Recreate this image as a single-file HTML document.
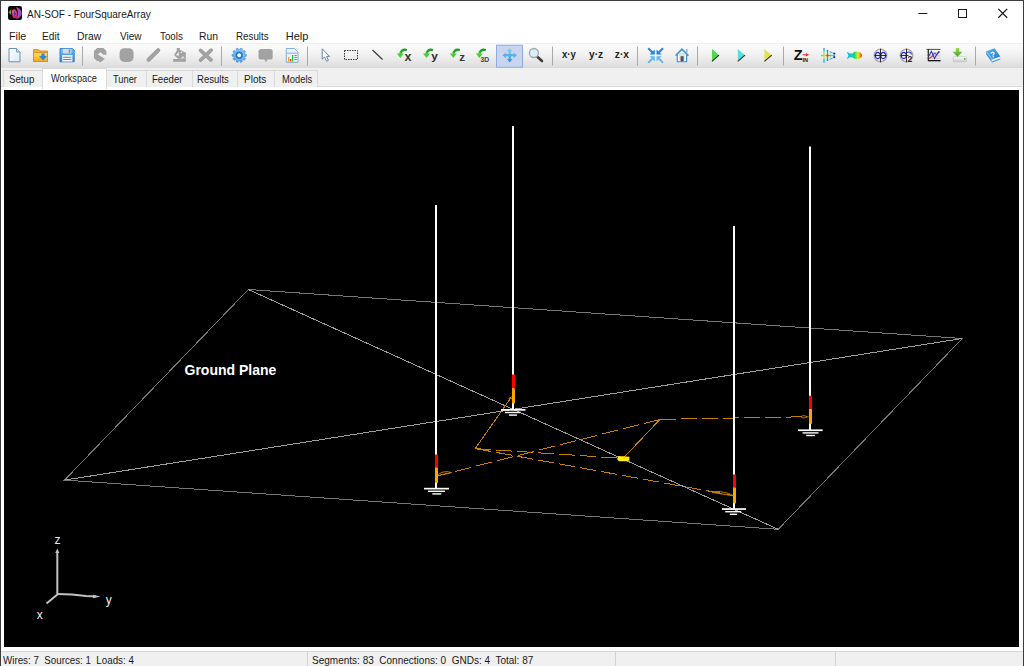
<!DOCTYPE html>
<html><head><meta charset="utf-8">
<style>
html,body{margin:0;padding:0;}
body{width:1024px;height:666px;position:relative;overflow:hidden;background:#fff;font-family:"Liberation Sans",sans-serif;color:#000;}
.a{position:absolute;}
.t{position:absolute;white-space:pre;font-size:11px;line-height:normal;transform-origin:0 0;color:#1a1a1a;}
#tb{left:1px;top:43px;width:1022px;height:25px;background:linear-gradient(#fafafa,#f9f9f9 20%,#eeeeee 55%,#e2e2e2 85%,#dadada);}
#tabs{left:1px;top:68px;width:1022px;height:19px;background:#f0f0f0;}
#page{left:1px;top:86px;width:1021px;height:565px;background:#fff;border-top:1px solid #dadada;box-sizing:border-box;}
#cv{left:4px;top:90px;width:1015px;height:557px;background:#000;}
#status{left:1px;top:651px;width:1022px;height:15px;background:#f0f0f0;border-top:1px solid #d8d8d8;box-sizing:border-box;}
.bl{position:absolute;top:0;height:666px;width:1px;background:#3c3c3c;}
.tab{position:absolute;top:70px;height:17px;background:#f0f0f0;border:1px solid #dadada;border-bottom:none;box-sizing:border-box;}
.ssep{position:absolute;top:652px;width:1px;height:14px;background:#d2d2d2;}
svg{position:absolute;left:0;top:0;}
</style></head><body>
<div class="a" id="tb"></div>
<div class="a" id="tabs"></div>
<div class="a" id="page"></div>
<div class="a" id="cv"></div>
<div class="a" id="status"></div>

<!-- tabs -->
<div class="tab" style="left:3px;width:40px;"></div>
<div class="tab" style="left:106px;width:41px;"></div>
<div class="tab" style="left:146px;width:47px;"></div>
<div class="tab" style="left:192px;width:46px;"></div>
<div class="tab" style="left:237px;width:38px;"></div>
<div class="tab" style="left:274px;width:44px;"></div>
<div class="a" style="left:42px;top:68px;width:65px;height:21px;background:#fff;border:1px solid #dadada;border-bottom:none;box-sizing:border-box;"></div>

<!-- title & menu text -->
<div class="t" style="left:27px;top:8px;transform:scaleX(0.912);">AN-SOF - FourSquareArray</div>
<div class="t" style="left:8.7px;top:30px;transform:scaleX(0.975);">File</div>
<div class="t" style="left:42.4px;top:30px;transform:scaleX(0.922);">Edit</div>
<div class="t" style="left:77.4px;top:30px;transform:scaleX(0.94);">Draw</div>
<div class="t" style="left:119.5px;top:30px;transform:scaleX(0.912);">View</div>
<div class="t" style="left:159.7px;top:30px;transform:scaleX(0.888);">Tools</div>
<div class="t" style="left:199.3px;top:30px;transform:scaleX(0.947);">Run</div>
<div class="t" style="left:235.7px;top:30px;transform:scaleX(0.889);">Results</div>
<div class="t" style="left:285.7px;top:30px;transform:scaleX(1.0);">Help</div>

<div class="t" style="left:8.7px;top:73px;transform:scaleX(0.882);">Setup</div>
<div class="t" style="left:50.8px;top:72px;transform:scaleX(0.838);">Workspace</div>
<div class="t" style="left:113px;top:73px;transform:scaleX(0.846);">Tuner</div>
<div class="t" style="left:152px;top:73px;transform:scaleX(0.874);">Feeder</div>
<div class="t" style="left:197.3px;top:73px;transform:scaleX(0.867);">Results</div>
<div class="t" style="left:244px;top:73px;transform:scaleX(0.913);">Plots</div>
<div class="t" style="left:281.7px;top:73px;transform:scaleX(0.85);">Models</div>

<div class="t" style="left:3px;top:654px;transform:scaleX(0.888);">Wires: 7  Sources: 1  Loads: 4</div>
<div class="t" style="left:311.7px;top:654px;transform:scaleX(0.91);">Segments: 83  Connections: 0  GNDs: 4  Total: 87</div>
<div class="ssep" style="left:307px;"></div>
<div class="ssep" style="left:615px;"></div>
<div class="ssep" style="left:835px;"></div>

<svg width="1024" height="90" viewBox="0 0 1024 90">
<defs>
<linearGradient id="gDoc" x1="0" y1="0" x2="1" y2="1"><stop offset="0" stop-color="#ffffff"/><stop offset="1" stop-color="#dbe9f3"/></linearGradient>
<linearGradient id="gFold" x1="0" y1="0" x2="0" y2="1"><stop offset="0" stop-color="#ffe35a"/><stop offset="1" stop-color="#f5a51c"/></linearGradient>
<linearGradient id="gSave" x1="0" y1="0" x2="0" y2="1"><stop offset="0" stop-color="#6cc0f4"/><stop offset="1" stop-color="#2f86d6"/></linearGradient>
<linearGradient id="gPan" x1="0" y1="0" x2="0" y2="1"><stop offset="0" stop-color="#8ad6fa"/><stop offset="1" stop-color="#1e8ee0"/></linearGradient>
<linearGradient id="gFish" x1="0" y1="0" x2="1" y2="0"><stop offset="0" stop-color="#00c8d8"/><stop offset="0.35" stop-color="#20e060"/><stop offset="0.6" stop-color="#e8e820"/><stop offset="1" stop-color="#f03010"/></linearGradient>
<linearGradient id="gRad" x1="0" y1="0" x2="0" y2="1"><stop offset="0" stop-color="#40a0f0"/><stop offset="0.5" stop-color="#f0e020"/><stop offset="1" stop-color="#40a0f0"/></linearGradient>
<linearGradient id="gTray" x1="0" y1="0" x2="0" y2="1"><stop offset="0" stop-color="#ffffff"/><stop offset="1" stop-color="#c8c8c8"/></linearGradient>
<linearGradient id="gBook" x1="0" y1="0" x2="1" y2="1"><stop offset="0" stop-color="#5ab8f0"/><stop offset="1" stop-color="#1a78d0"/></linearGradient>
<linearGradient id="gDl" x1="0" y1="0" x2="0" y2="1"><stop offset="0" stop-color="#9ae040"/><stop offset="1" stop-color="#3aa81e"/></linearGradient>
</defs>

<!-- app icon -->
<defs><linearGradient id="gApp" x1="0" y1="0" x2="0" y2="1"><stop offset="0" stop-color="#e03890"/><stop offset="0.4" stop-color="#9a58c8"/><stop offset="1" stop-color="#8048b8"/></linearGradient></defs>
<rect x="8" y="6" width="14" height="14" rx="2.2" fill="#050505"/>
<path d="M8.3,12.2 L11.3,9 L11.3,15.2 Z" fill="#7a9440"/>
<path d="M15.8,7.2 C19.5,7.8 21.8,10.5 21.6,13.4 C21.4,16.4 19,18.6 15.8,18.8 C18.6,16.2 18.8,10.8 15.8,7.2 Z" fill="url(#gApp)"/>
<path d="M12.2,10.2 C13.2,8.8 15.2,9 16.2,10.6 C17.6,12.6 17.8,15.4 16.8,17.4 C15.4,18.8 13.2,18.2 12.6,16.2 C12,14.2 11.8,12.2 12.2,10.2 Z" fill="#d8388e"/>
<path d="M14,11.2 L16.6,13.4 L14.6,15.8 Z" fill="#1c34c8"/>
<path d="M14.8,11.8 L16.2,12.8 L15.2,13.2 Z" fill="#30b0e0"/>
<path d="M12.4,10.6 L13.8,10.2 L13.4,13.2 L12.4,12.6 Z" fill="#f07a20"/>
<path d="M13.4,16.4 C14.6,18.2 16.6,18.4 18.2,17.4 L16.8,15.6 Z" fill="#f01444"/>
<!-- window controls -->
<rect x="918.4" y="13" width="9" height="1" fill="#1a1a1a"/>
<rect x="958.5" y="9.5" width="8" height="8" fill="none" stroke="#1a1a1a" stroke-width="1"/>
<path d="M998.3,8.9 L1007.2,17.8 M1007.2,8.9 L998.3,17.8" stroke="#1a1a1a" stroke-width="1.25" fill="none"/>

<!-- menu underline -->
<rect x="1" y="43" width="1022" height="1" fill="#f0f0f0"/>

<!-- separators -->
<g fill="#a8a8a8">
<rect x="82" y="46.5" width="1" height="19"/>
<rect x="221" y="46.5" width="1" height="19"/>
<rect x="307" y="46.5" width="1" height="19"/>
<rect x="552" y="46.5" width="1" height="19"/>
<rect x="637" y="46.5" width="1" height="19"/>
<rect x="697" y="46.5" width="1" height="19"/>
<rect x="783" y="46.5" width="1" height="19"/>
<rect x="975" y="46.5" width="1" height="19"/>
</g>

<!-- 1 new doc -->
<path d="M9,48.5 H16.5 L20,52 V61.8 H9 Z" fill="url(#gDoc)" stroke="#6890b4" stroke-width="1"/>
<path d="M16.5,48.5 V52 H20" fill="#c9dcea" stroke="#6890b4" stroke-width="0.8"/>

<!-- 2 open folder -->
<path d="M33.5,49.5 H38.5 L40,51 H47.5 V61.5 H33.5 Z" fill="#f4b23a" stroke="#d98c24" stroke-width="0.9"/>
<path d="M33.5,52.5 H47.5 V61.5 H33.5 Z" fill="url(#gFold)" stroke="#d98c24" stroke-width="0.9"/>
<path d="M41.5,53.5 H44.5 V56 H47 L43,60.5 L39,56 H41.5 Z" fill="#2a88d8"/>

<!-- 3 save -->
<path d="M60,48.5 H72.5 L74.2,50.2 V61.8 H60 Z" fill="url(#gSave)" stroke="#2c7cc8" stroke-width="0.9"/>
<rect x="62.8" y="48.8" width="8.6" height="4.6" fill="#dcdcdc"/>
<rect x="68.6" y="49.5" width="1.8" height="3.2" fill="#4aa0e0"/>
<rect x="62.2" y="55" width="10.2" height="6.6" fill="#f2f2f2"/>
<rect x="63.2" y="56.8" width="8.2" height="0.9" fill="#7a7a7a"/>
<rect x="63.2" y="59" width="8.2" height="0.9" fill="#7a7a7a"/>

<!-- 4 gray hook -->
<path d="M97.2,48 L103.4,48 L106.4,51 L106.4,54.8 L103.4,54.8 L100.4,52.2 L97.8,54.4 L104.8,58.8 L102,61.2 L99.6,62.4 L98.8,61 L97,61 L93.9,58 L93.9,51 Z" fill="#a2a2a2"/>
<!-- 5 gray octagon -->
<rect x="119.6" y="48.2" width="14" height="13.8" rx="4.8" fill="#a2a2a2"/>

<!-- 6 gray pencil line -->
<path d="M148.6,59.8 L158.2,50.2" stroke="#a2a2a2" stroke-width="4.2" stroke-linecap="round"/>

<!-- 7 gray microscope -->
<rect x="173.2" y="59" width="12.7" height="2.8" fill="#a2a2a2"/>
<path d="M176.8,48 L179.9,48 L179.9,50 L181.5,50.5 L183.5,51.8 L185.8,52.5 L185.8,58.8 L178,58.8 L176.5,57.5 L174.5,55.5 L174.5,54 L176.5,51.2 L176.8,50 Z" fill="#a2a2a2"/>
<path d="M176,55.2 L178.8,51.8 L178.8,55.8 Z M181,58.2 L183.5,55.8 L183.5,58.2 Z" fill="#f2f2f2"/>
<circle cx="181.4" cy="52.4" r="0.8" fill="#eeeeee"/>
<!-- 8 gray X -->
<path d="M200.6,50.4 L211,60 M211.2,50.2 L200.6,60.2" stroke="#a2a2a2" stroke-width="3.8" stroke-linecap="round"/>

<!-- 9 gear -->
<defs><radialGradient id="gGear" cx="0.5" cy="0.4" r="0.6"><stop offset="0" stop-color="#a8e0fc"/><stop offset="1" stop-color="#4a9ee6"/></radialGradient></defs>
<path d="M238.21,48.17 L240.19,48.17 L240.32,49.81 L241.52,50.20 L242.59,48.95 L244.19,50.11 L243.33,51.52 L244.07,52.54 L245.68,52.15 L246.29,54.04 L244.76,54.67 L244.76,55.93 L246.29,56.56 L245.68,58.45 L244.07,58.06 L243.33,59.08 L244.19,60.49 L242.59,61.65 L241.52,60.40 L240.32,60.79 L240.19,62.43 L238.21,62.43 L238.08,60.79 L236.88,60.40 L235.81,61.65 L234.21,60.49 L235.07,59.08 L234.33,58.06 L232.72,58.45 L232.11,56.56 L233.64,55.93 L233.64,54.67 L232.11,54.04 L232.72,52.15 L234.33,52.54 L235.07,51.52 L234.21,50.11 L235.81,48.95 L236.88,50.20 L238.08,49.81 Z" fill="url(#gGear)" stroke="#3a88d6" stroke-width="0.5" transform="rotate(18 239.2 55.3)"/>
<circle cx="239.2" cy="55.3" r="2.9" fill="none" stroke="#2a74c4" stroke-width="1.6"/>
<circle cx="239.2" cy="55.3" r="1.7" fill="#f8fbff"/>
<!-- 10 speech bubble -->
<rect x="258.5" y="49" width="14.2" height="10.6" rx="2.6" fill="#a2a2a2"/>
<path d="M264,59 L268,59 L266,62.2 Z" fill="#a2a2a2"/>

<!-- 11 report -->
<path d="M286.3,48.5 H294.5 L298,52 V62.3 H286.3 Z" fill="#eaf3fa" stroke="#7aa6c8" stroke-width="0.9"/>
<rect x="287" y="52.5" width="10.5" height="1.4" fill="#9cc8e8"/>
<rect x="288" y="57" width="1.3" height="4.5" fill="#f4a020"/>
<rect x="290" y="59" width="1.3" height="2.5" fill="#e83030"/>
<rect x="292" y="55" width="1.3" height="6.5" fill="#30c040"/>
<rect x="294.5" y="55" width="2.2" height="1" fill="#3a90e0"/>
<rect x="294.5" y="57" width="2.2" height="1" fill="#3a90e0"/>
<rect x="294.5" y="59" width="2.2" height="1" fill="#3a90e0"/>

<!-- 12 cursor -->
<path d="M322.2,48.8 L322.2,59.2 L324.6,57 L326.6,61.2 L328.4,60.4 L326.5,56.4 L329.5,56.4 Z" fill="#ffffff" stroke="#5a78a0" stroke-width="0.9" stroke-linejoin="round"/>

<!-- 13 dashed rect -->
<rect x="344.5" y="50.5" width="13" height="9" fill="none" stroke="#3a3a3a" stroke-width="1" stroke-dasharray="1.5,1"/>

<!-- 14 line -->
<path d="M372.5,50 L382.5,59.5" stroke="#3a3a3a" stroke-width="1.2"/>

<!-- 15-18 rotate arrows -->
<defs><linearGradient id="gRot" x1="0" y1="1" x2="0.6" y2="0"><stop offset="0" stop-color="#78e858"/><stop offset="0.5" stop-color="#28a828"/><stop offset="1" stop-color="#1c9a2a"/></linearGradient></defs>
<g id="rot">
<path d="M400.3,55 C400.2,51 402.8,49 406.8,50.1" stroke="url(#gRot)" stroke-width="2.5" fill="none"/>
<path d="M396.9,53.6 L403.8,53.6 L400.35,57.9 Z" fill="#4ccc3c"/>
</g>
<use href="#rot" x="26.15" y="0"/>
<use href="#rot" x="53" y="0"/>
<use href="#rot" x="79" y="0"/>
<text x="404.4" y="60.7" font-family="Liberation Sans" font-size="12.5" font-weight="bold" fill="#383838">x</text>
<text x="431.2" y="59.6" font-family="Liberation Sans" font-size="11.8" font-weight="bold" fill="#2a2a2a">y</text>
<text x="459.3" y="60.6" font-family="Liberation Sans" font-size="11.5" font-weight="bold" fill="#383838">z</text>
<text x="480.6" y="61.8" font-family="Liberation Sans" font-size="6.8" font-weight="bold" fill="#4a3a40">3D</text>
<!-- 19 pressed pan -->
<rect x="496.5" y="45.2" width="26" height="22" fill="#c9d5ee" stroke="#8eabe4" stroke-width="1"/>
<path d="M509.70,48.00 L512.40,51.30 L510.80,51.30 L510.80,54.10 L513.60,54.10 L513.60,52.50 L516.90,55.20 L513.60,57.90 L513.60,56.30 L510.80,56.30 L510.80,59.10 L512.40,59.10 L509.70,62.40 L507.00,59.10 L508.60,59.10 L508.60,56.30 L505.80,56.30 L505.80,57.90 L502.50,55.20 L505.80,52.50 L505.80,54.10 L508.60,54.10 L508.60,51.30 L507.00,51.30 Z" fill="url(#gPan)"/>

<!-- 20 magnifier -->
<path d="M537.3,56.8 L542,61" stroke="#3a3a3a" stroke-width="2.6" stroke-linecap="round"/>
<circle cx="533.9" cy="53" r="4.5" fill="#d6effb" stroke="#a6a6a6" stroke-width="1.3"/>

<!-- 21-23 text views -->
<text x="562" y="58.4" font-family="Liberation Sans" font-size="11" font-weight="bold" fill="#1e1e1e" transform="translate(562,0) scale(0.875,1) translate(-562,0)">x·y</text>
<text x="589" y="58.4" font-family="Liberation Sans" font-size="11" font-weight="bold" fill="#1e1e1e" transform="translate(589,0) scale(0.933,1) translate(-589,0)">y·z</text>
<text x="614.8" y="58.4" font-family="Liberation Sans" font-size="11" font-weight="bold" fill="#1e1e1e" transform="translate(614.8,0) scale(0.933,1) translate(-614.8,0)">z·x</text>

<!-- 24 shrink arrows -->
<g fill="#2a86d6">
<path d="M654.8,49.4 V54.6 H649.6 Z"/>
<path d="M656.5,49.4 V54.6 H661.7 Z"/>
</g>
<g stroke="#2a86d6" stroke-width="2.1" stroke-linecap="square">
<path d="M649,48.9 L652.8,52.7"/><path d="M662.3,48.9 L658.5,52.7"/>
</g>
<g fill="#62bcf2">
<path d="M654.8,61.6 V56.3 H649.6 Z"/>
<path d="M656.5,61.6 V56.3 H661.7 Z"/>
</g>
<g stroke="#62bcf2" stroke-width="2.1" stroke-linecap="square">
<path d="M649,62 L652.8,58.2"/><path d="M662.3,62 L658.5,58.2"/>
</g>
<!-- 25 home -->
<rect x="686" y="49" width="1.6" height="3.5" fill="#a0b8d0"/>
<path d="M677.3,55 V61.6 H686.6 V55" fill="#ffffff" stroke="#3a98e0" stroke-width="1.2"/>
<path d="M675.6,55.6 L682,49.2 L688.4,55.6" fill="none" stroke="#3a98e0" stroke-width="1.6"/>
<rect x="679.2" y="53" width="5.6" height="8.5" fill="#e2e2e2"/><rect x="680.6" y="56.2" width="3" height="5.3" fill="#505050"/>

<!-- 26-28 play -->
<path d="M712,49 L719,55.2 L712,61.4 Z" fill="#50d850"/>
<path d="M719,55.2 L712,61.4" stroke="#2a2a2a" stroke-width="1.1"/>
<path d="M737.8,49 L745,55.2 L737.8,61.4 Z" fill="#54e0e2"/>
<path d="M745,55.2 L737.8,61.4" stroke="#2a2a2a" stroke-width="1.1"/>
<path d="M764.4,49 L771.8,55.2 L764.4,61.4 Z" fill="#e2e258"/>
<path d="M771.8,55.2 L764.4,61.4" stroke="#2a2a2a" stroke-width="1.1"/>

<!-- 29 Z_IN -->
<text x="793.8" y="59.8" font-family="Liberation Sans" font-size="14.5" font-weight="bold" fill="#111">Z</text>
<path d="M802.6,54.8 L806.5,54.8" stroke="#f03030" stroke-width="1.1"/>
<path d="M806,53 L809,54.8 L806,56.6 Z" fill="#f03030"/>
<text x="802.4" y="62.2" font-family="Liberation Sans" font-size="5.6" font-weight="bold" fill="#222">IN</text>

<!-- 30 radiation pattern -->
<defs>
<linearGradient id="gB1" x1="0" y1="0" x2="0" y2="1"><stop offset="0" stop-color="#5090f0"/><stop offset="0.2" stop-color="#40d0e0"/><stop offset="0.35" stop-color="#e0e040"/><stop offset="0.5" stop-color="#a0e040"/><stop offset="0.65" stop-color="#e0e040"/><stop offset="0.8" stop-color="#40d0e0"/><stop offset="1" stop-color="#5090f0"/></linearGradient>
<linearGradient id="gB2" x1="0" y1="0" x2="0" y2="1"><stop offset="0" stop-color="#3060f0"/><stop offset="0.3" stop-color="#30d060"/><stop offset="0.5" stop-color="#f02010"/><stop offset="0.7" stop-color="#30d060"/><stop offset="1" stop-color="#3060f0"/></linearGradient>
<linearGradient id="gH" x1="0" y1="0" x2="1" y2="0"><stop offset="0" stop-color="#40c0f0"/><stop offset="0.3" stop-color="#e0e040"/><stop offset="0.45" stop-color="#f02010"/><stop offset="0.7" stop-color="#f0a020"/><stop offset="1" stop-color="#40d060"/></linearGradient>
<linearGradient id="gFish2" x1="0" y1="0" x2="1" y2="0"><stop offset="0" stop-color="#00c8e0"/><stop offset="0.3" stop-color="#10e070"/><stop offset="0.6" stop-color="#e8f020"/><stop offset="0.8" stop-color="#f8a010"/><stop offset="1" stop-color="#f82000"/></linearGradient>
</defs>
<rect x="823.2" y="48" width="1.6" height="14.6" fill="url(#gB1)"/>
<rect x="826.8" y="49.9" width="1.4" height="11" fill="url(#gB2)"/>
<rect x="821" y="54.9" width="14" height="1.3" fill="url(#gH)"/>
<path d="M829.6,51.5 L831.2,52.2 L832.6,53 M829.6,59.5 L831.2,58.8 L832.6,58" stroke="#40b8f0" stroke-width="1.2" fill="none"/>
<path d="M829.8,53.5 L831,54.5 M829.8,57.5 L831,56.5" stroke="#60e060" stroke-width="1" fill="none"/>
<circle cx="834.2" cy="53.6" r="1.1" fill="#1030f0"/>
<circle cx="834.2" cy="57.2" r="1.1" fill="#1030f0"/>

<!-- 31 fish -->
<path d="M846.8,51.8 L849.8,53.6 L851.8,53.2 L851.8,57.8 L849.8,57.3 L846.8,59.2 L848.4,55.5 Z" fill="#18c0c8"/>
<ellipse cx="856.8" cy="55.4" rx="5.2" ry="3.8" fill="url(#gFish2)"/>

<!-- 32 polar -->
<g transform="translate(880.5,55.5)">
<circle r="6.3" fill="none" stroke="#a6a6a6" stroke-width="1.3"/>
<ellipse cx="-2.7" cy="0" rx="2.5" ry="3.1" fill="none" stroke="#2424f0" stroke-width="1.2"/>
<ellipse cx="2.7" cy="0" rx="2.5" ry="3.1" fill="none" stroke="#2424f0" stroke-width="1.2"/>
<path d="M0,-6.8 V6.8 M-6,0 H6" stroke="#1a1a1a" stroke-width="0.9"/>
</g>
<!-- 33 polar2 -->
<g transform="translate(906.5,55.5)">
<circle r="6.3" fill="none" stroke="#a6a6a6" stroke-width="1.3"/>
<ellipse cx="-2.7" cy="0" rx="2.5" ry="3.1" fill="none" stroke="#2424f0" stroke-width="1.2"/>
<path d="M0.4,-3 C2,-4 4.6,-3.4 5,-1.2" fill="none" stroke="#2424f0" stroke-width="1.2"/>
<path d="M0,-6.8 V6.8 M-6,0 H2" stroke="#1a1a1a" stroke-width="0.9"/>
</g>
<text x="907.4" y="61.9" font-family="Liberation Sans" font-size="8.6" font-weight="bold" fill="#1c2450">2</text>

<!-- 34 chart -->
<g>
<path d="M928.5,52.5 H940.5 M928.5,55.8 H940.5 M928.5,58.2 H940.5" stroke="#b8b8b8" stroke-width="0.7"/>
<path d="M926.5,49.4 H940.5" stroke="#404040" stroke-width="0.9"/>
<path d="M928.3,49 V60.6 H940.6" fill="none" stroke="#1a1a1a" stroke-width="1.1"/>
<path d="M926.8,52 H928 M926.8,55 H928 M926.8,58 H928 M930,61 V62 M933,61 V62 M936,61 V62 M939,61 V62" stroke="#555" stroke-width="0.6"/>
<path d="M929,58.5 L932,56.5 L934,53.6 L935,53.2 L936.5,55 L939.5,51.6" fill="none" stroke="#f02828" stroke-width="1.1"/>
<path d="M929,56 L931.4,51.3 L934.5,58.5 L937,54 L939.2,51" fill="none" stroke="#2838f0" stroke-width="1.1"/>
</g>

<!-- 35 download -->
<rect x="953.2" y="56.8" width="13.2" height="5" rx="0.6" fill="url(#gTray)" stroke="#b8b8b8" stroke-width="0.6"/>
<rect x="964" y="58.2" width="1.3" height="1.6" fill="#30c030"/>
<path d="M955.8,48 H959.2 V51.8 H962.4 L957.5,56.8 L952.6,51.8 H955.8 Z" fill="url(#gDl)"/>

<!-- 36 help book -->
<path d="M985.9,51.6 L991.6,59.6 L992,62.4 L986.3,54.4 Z" fill="#3a96e0"/>
<path d="M991.6,59.6 L1000.3,56.4 L1000.4,58.8 L992,61.8 Z" fill="#eef2f6"/>
<path d="M992,61.6 L1000.4,58.6 L1000.2,59.6 L992,62.5 Z" fill="#3a86d0"/>
<path d="M985.9,51.6 L994.6,48.3 L1000.3,56.4 L991.6,59.6 Z" fill="url(#gBook)"/>
<path d="M987,52 L992.3,59.3" stroke="#8ad0f8" stroke-width="0.9"/>
<text x="990.4" y="57" font-family="Liberation Sans" font-size="8" font-weight="bold" fill="#ffffff" transform="rotate(-12 994 54)">?</text>
</svg>


<svg width="1024" height="666" viewBox="0 0 1024 666">
<g fill="none" stroke-width="1" shape-rendering="crispEdges">
<path d="M248.3,289.5 L962.3,338.5 L778.2,529.3 L64.5,480.1 Z" stroke="#767676"/>
<path d="M248.3,289.5 L778.2,529.3" stroke="#9e9e9e"/>
<path d="M962.3,338.5 L64.5,480.1" stroke="#9e9e9e"/>
</g>
<text x="184.5" y="375" font-family="Liberation Sans" font-size="14" font-weight="bold" fill="#ffffff">Ground Plane</text>
<g stroke="#c0c0c0" stroke-width="2" fill="none">
<path d="M57.3,552 V594.5"/>
<path d="M57.3,594 L72,594.6 L86,596 L96,596.4"/>
<path d="M58,594 L46.5,603.5"/>
</g>
<path d="M55.2,553 L57.3,548.5 L59.4,553 Z" fill="#c0c0c0"/>
<path d="M93,594.8 L100.5,596.5 L93,598.2 Z" fill="#c0c0c0"/>
<text x="54.5" y="544" font-family="Liberation Sans" font-size="12" fill="#f0f0f0">z</text>
<text x="105.8" y="604" font-family="Liberation Sans" font-size="12" fill="#f0f0f0">y</text>
<text x="36.8" y="619.2" font-family="Liberation Sans" font-size="12" fill="#f0f0f0">x</text>
<g stroke="#c88000" stroke-width="1" fill="none" shape-rendering="crispEdges">
<path d="M623.0,458.4 L660.0,419.4"/>
<path d="M475.2,448.6 L511.0,397.6"/>
<path d="M660.0,419.4 L676.0,419.1 M681.0,419.0 L697.0,418.7 M702.0,418.6 L718.0,418.3 M723.0,418.2 L739.0,417.9 M744.0,417.9 L760.0,417.6 M765.0,417.5 L781.0,417.2 M786.0,417.1 L801.0,416.8"/>
<path d="M660.0,419.4 L644.0,423.5 M639.0,424.7 L623.0,428.8 M618.0,430.1 L602.0,434.1 M597.0,435.4 L581.0,439.5 M576.0,440.7 L560.0,444.8 M555.0,446.1 L539.0,450.1 M534.0,451.4 L518.0,455.4 M513.0,456.7 L497.0,460.8 M492.0,462.0 L476.0,466.1 M471.0,467.4 L455.0,471.4 M450.0,472.7 L437.0,476.0"/>
<path d="M475.2,448.6 L491.2,449.7 M496.2,450.0 L512.2,451.1 M517.2,451.4 L533.2,452.4 M538.2,452.8 L554.2,453.8 M559.2,454.2 L575.2,455.2 M580.2,455.6 L596.2,456.6 M601.2,457.0 L617.2,458.0 M622.2,458.3 L623.0,458.4"/>
<path d="M475.2,448.6 L491.2,451.5 M496.2,452.4 L512.2,455.3 M517.2,456.2 L533.2,459.2 M538.2,460.1 L554.2,463.0 M559.2,463.9 L575.2,466.8 M580.2,467.7 L596.2,470.6 M601.2,471.5 L617.2,474.4 M622.2,475.3 L638.2,478.3 M643.2,479.2 L659.2,482.1 M664.2,483.0 L680.2,485.9 M685.2,486.8 L701.2,489.7 M706.2,490.6 L722.2,493.5 M727.2,494.4 L733.0,495.5"/>
</g>
<g stroke="#c88000" stroke-width="1" fill="none">
<path d="M437.5,475.5 C440,472.5 445,470.5 451.6,472.6 C446,474.5 441,474.2 437.5,476"/>
<path d="M733,495.5 C730,494 727,492.5 723.4,492.4 C720,491 716,491 712,492.5 C717,493 721,494 725,494.5 C728,495 731,495.5 733,495.8"/>
<path d="M808.5,416.8 L807,416.8 C805,415.3 802,415.3 801,416.8 C802,418.3 805,418.3 807,416.8"/>
<path d="M511.5,396.8 L508.8,398.6 L513.5,398.6 Z"/>
</g>
<path d="M618.6,456 L629.4,456.8 L629.4,460.6 L627,461.2 L619,461.2 L617,459 Z" fill="#ffee00"/>
<path d="M621,456.5 L624,456.5 M623.5,458 L624.5,458.5" stroke="#e0a000" stroke-width="1"/>
<g>
<rect x="435" y="205" width="2" height="284" fill="#fff"/>
<rect x="435" y="454.5" width="3" height="13.3" fill="#ff0000"/>
<rect x="435" y="467.8" width="3" height="15.0" fill="#ffa500"/>
<rect x="424" y="487.8" width="25.0" height="1.7" fill="#fff"/>
<rect x="428" y="490.6" width="17.0" height="1.4" fill="#fff"/>
<rect x="432.3" y="493.2" width="9.0" height="1.4" fill="#fff"/>
<rect x="512" y="126" width="2" height="284.2" fill="#fff"/>
<rect x="512" y="374.5" width="3" height="14.0" fill="#ff0000"/>
<rect x="512" y="388.5" width="3" height="15.0" fill="#ffa500"/>
<rect x="501" y="409.0" width="24.5" height="1.7" fill="#fff"/>
<rect x="505" y="411.8" width="15.6" height="1.4" fill="#fff"/>
<rect x="509" y="414.4" width="8.0" height="1.4" fill="#fff"/>
<rect x="733" y="226" width="2" height="283.4" fill="#fff"/>
<rect x="733" y="474.5" width="3" height="13.3" fill="#ff0000"/>
<rect x="733" y="487.8" width="3" height="15.6" fill="#ffa500"/>
<rect x="722" y="508.2" width="24.0" height="1.7" fill="#fff"/>
<rect x="725.2" y="511.0" width="16.0" height="1.4" fill="#fff"/>
<rect x="729.8" y="513.6" width="7.4" height="1.4" fill="#fff"/>
<rect x="809" y="146.5" width="2" height="284.1" fill="#fff"/>
<rect x="809" y="395.7" width="3" height="13.5" fill="#ff0000"/>
<rect x="809" y="409.2" width="3" height="14.6" fill="#ffa500"/>
<rect x="798" y="429.4" width="24.7" height="1.7" fill="#fff"/>
<rect x="802.5" y="432.2" width="16.0" height="1.4" fill="#fff"/>
<rect x="806.2" y="434.8" width="8.7" height="1.4" fill="#fff"/>
</g>
</svg>

<div class="bl" style="left:0;"></div>
<div class="bl" style="left:1023px;"></div>
<div class="a" style="left:0;top:0;width:1024px;height:1px;background:#3c3c3c;"></div>
</body></html>
